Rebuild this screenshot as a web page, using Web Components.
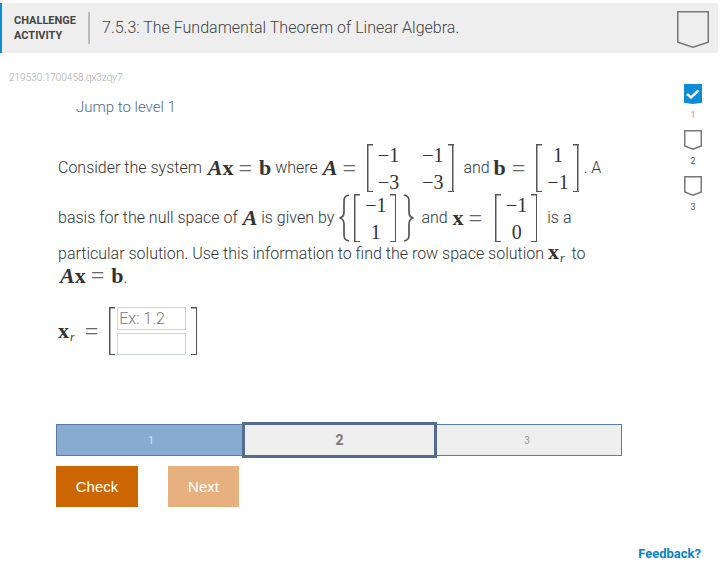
<!DOCTYPE html>
<html lang="en">
<head>
<meta charset="utf-8">
<title>Challenge activity</title>
<style>
  html, body { margin: 0; background: #fff; }
  body { font-family: Roboto, "Liberation Sans", sans-serif; color: #444; }
</style>
</head>
<body>
<challenge-activity>
  <span slot="title">7.5.3: The Fundamental Theorem of Linear Algebra.</span>
  <span slot="code">219530.1700458.qx3zqy7</span>
  <span slot="jump">Jump to level 1</span>
  <level-list slot="levels"></level-list>
  <question-text slot="question"></question-text>
  <answer-row slot="answer"></answer-row>
  <level-progress slot="progress"></level-progress>
</challenge-activity>

<script>
class LevelBadge extends HTMLElement {
    static tag = "level-badge";
    constructor() {
        super();
        this.attachShadow({ mode: 'open' });
    }
    connectedCallback() {
        const w = Number(this.getAttribute('data-w')) || 20;
        const h = Number(this.getAttribute('data-h')) || 21;
        const done = this.hasAttribute('data-done');
        const tip = done ? 2 : 2 + h * 0.1;
        const path = `M.75 .75H${w - .75}V${h - tip}L${w / 2} ${h - .75}L.75 ${h - tip}Z`;
        this.shadowRoot.innerHTML = `
            <style>
                :host { display: block; width: ${w}px; height: ${h}px; }
                svg { display: block; }
            </style>
            <svg width="${w}" height="${h}" viewBox="0 0 ${w} ${h}">
                <path d="${path}" fill="${done ? '#0d8bd9' : 'none'}" stroke="${done ? '#0d8bd9' : '#777'}" stroke-width="1.5"/>
                ${done ? `<path d="M3 10L7 13.5L14.5 6.5" fill="none" stroke="#fff" stroke-width="2.400"/>` : ''}
            </svg>`;
    }
}

class LevelList extends HTMLElement {
    static tag = "level-list";
    constructor() {
        super();
        this.attachShadow({ mode: 'open' });
        this.shadowRoot.innerHTML = `
            <style>
                :host { display: flex; flex-direction: column; align-items: center; width: 20px; }
                .item { display: flex; flex-direction: column; align-items: center; height: 46px; flex: none; }
                level-badge { flex: none; }
                span { font: 9px/11px Roboto, sans-serif; margin-top: 6px; color: #555; }
                .first span { color: #d98a94; }
            </style>
            <div class="item first"><level-badge data-w="18" data-h="20" data-done></level-badge><span>1</span></div>
            <div class="item"><level-badge data-w="18" data-h="20"></level-badge><span>2</span></div>
            <div class="item"><level-badge data-w="18" data-h="20"></level-badge><span>3</span></div>`;
    }
}

const BRACKETS = `
    linear-gradient(#555,#555) left/1.5px 100% no-repeat,
    linear-gradient(#555,#555) left top/6px 1.5px no-repeat,
    linear-gradient(#555,#555) left bottom/6px 1.5px no-repeat,
    linear-gradient(#555,#555) right/1.5px 100% no-repeat,
    linear-gradient(#555,#555) right top/6px 1.5px no-repeat,
    linear-gradient(#555,#555) right bottom/6px 1.5px no-repeat`;

class MathMatrix extends HTMLElement {
    static tag = "math-matrix";
    constructor() {
        super();
        this.attachShadow({ mode: 'open' });
    }
    connectedCallback() {
        const rows = this.getAttribute('data-rows').split(';').map(r => r.split(','));
        const cells = rows.flat().map(c => `<span>${c}</span>`).join('');
        this.shadowRoot.innerHTML = `
            <style>
                :host {
                    display: inline-grid;
                    grid-template-columns: repeat(${rows[0].length}, auto);
                    column-gap: 23px;
                    row-gap: 5px;
                    justify-items: center;
                    align-items: center;
                    align-content: center;
                    height: 48px;
                    box-sizing: border-box;
                    padding: 0 10px 0 11px;
                    font: 20px/22px "Liberation Serif", serif;
                    color: #333;
                    white-space: normal;
                    background: ${BRACKETS};
                }
            </style>${cells}`;
    }
}

class MathBrace extends HTMLElement {
    static tag = "math-brace";
    constructor() {
        super();
        this.attachShadow({ mode: 'open' });
    }
    connectedCallback() {
        const flip = this.hasAttribute('data-right') ? 'transform: scaleX(-1);' : '';
        this.shadowRoot.innerHTML = `
            <style>
                :host { display: block; width: 12px; height: 48px; white-space: normal; }
                svg { display: block; ${flip} }
            </style>
            <svg width="12" height="48" viewBox="0 0 12 48">
                <path d="M11 1C6.500 2 6 4 6 8V18C6 21.500 4.500 23.500 1.500 24C4.500 24.500 6 26.500 6 30V40C6 44 6.500 46 11 47" fill="none" stroke="#555" stroke-width="1.700"/>
            </svg>`;
    }
}

const MATH_CSS = `
    i, b { font-family: "Liberation Serif", serif; color: #333; font-size: 22px; font-weight: 700; line-height: 20px; }
    .eq { font: 24px/20px "Liberation Serif", serif; color: #666; margin: 0 7px 0 5px; }
    .eq.wide { margin: 0 11px 0 6px; }
    sub { font: italic 12px "Liberation Serif", serif; line-height: 0; color: #333; vertical-align: -3px; margin: 0 3px 0 1px; }
`;

class QuestionText extends HTMLElement {
    static tag = "question-text";
    constructor() {
        super();
        this.attachShadow({ mode: 'open' });
        this.shadowRoot.innerHTML = `
            <style>
                :host {
                    display: block;
                    width: 545px;
                    font: 300 16px/22px Roboto, sans-serif;
                    color: #333;
                }
                ${MATH_CSS}
                .l1, .l2 { display: flex; align-items: center; height: 48px; white-space: pre; }
                .l2 { margin-top: 2px; }
                .l1 math-matrix, .l2 math-matrix { flex: none; margin-right: 4px; }
                .start { margin-left: 2px; }
            </style>
            <div class="l1">Consider the system <i class="start">A</i><b>x</b><span class="eq">=</span><b>b</b> where <i style="margin-left:1px">A</i><span class="eq wide" style="margin-left:5px">=</span><math-matrix data-rows="−1,−1;−3,−3" style="margin-right:6px"></math-matrix> and <b>b</b><span class="eq wide">=</span><math-matrix data-rows="1;−1" style="margin-right:5px"></math-matrix>. A</div>
            <div class="l2">basis for the null space of <i style="margin-left:1px">A</i> is given by <math-brace></math-brace><math-matrix data-rows="−1;1" style="margin:0 7px 0 4px"></math-matrix><math-brace data-right style="margin-right:2px"></math-brace> and <b style="margin-left:1px">x</b><span class="eq wide" style="margin:0 13px 0 5px">=</span><math-matrix data-rows="−1;0" style="margin-right:6px"></math-matrix> is a</div>
            <div>particular solution. Use this information to find the row space solution <b>x</b><sub>r</sub> to</div>
            <div><i class="start">A</i><b>x</b><span class="eq">=</span><b>b</b>.</div>`;
    }
}

class AnswerRow extends HTMLElement {
    static tag = "answer-row";
    constructor() {
        super();
        this.attachShadow({ mode: 'open' });
        this.shadowRoot.innerHTML = `
            <style>
                :host { display: flex; align-items: center; height: 48px; }
                ${MATH_CSS}
                .eq { margin: 0 11px 0 7px; }
                .matrix {
                    display: flex; flex-direction: column; gap: 3px;
                    box-sizing: border-box; height: 48px; width: 88px; padding: 0 11px 0 8px;
                    background: ${BRACKETS};
                }
                input {
                    box-sizing: border-box; width: 69px; height: 22.5px; margin: 0; padding: 0 1px;
                    border: 1px solid #cfd8dc; border-radius: 0; outline: none; background: #fff;
                    font: 300 16px Roboto, sans-serif;
                }
                input::placeholder { color: #777; opacity: 1; }
            </style>
            <span><b>x</b><sub>r</sub></span><span class="eq">=</span>
            <div class="matrix">
                <input placeholder="Ex: 1.2" aria-label="first entry">
                <input aria-label="second entry">
            </div>`;
    }
}

class LevelProgress extends HTMLElement {
    static tag = "level-progress";
    constructor() {
        super();
        this.attachShadow({ mode: 'open' });
        this.shadowRoot.innerHTML = `
            <style>
                :host {
                    display: grid;
                    grid-template-columns: repeat(3, 1fr);
                    width: 566px;
                    height: 32px;
                    box-sizing: border-box;
                    border: 1px solid #5b7ea6;
                    font: 10px Roboto, sans-serif;
                }
                div { display: flex; align-items: center; justify-content: center; background: #eee; color: #999; }
                .done { background: #87abd1; color: #d5e2ef; }
                .current {
                    position: relative;
                    outline: 3px solid #546c8f;
                    margin-right: -1px;
                    font-weight: 700;
                    font-size: 14px;
                    color: #777;
                    z-index: 1;
                }
            </style>
            <div class="done">1</div>
            <div class="current">2</div>
            <div>3</div>`;
    }
}

class ChallengeActivity extends HTMLElement {
    static tag = "challenge-activity";
    constructor() {
        super();
        this.attachShadow({ mode: 'open' });
        this.shadowRoot.innerHTML = `
            <style>
                :host { display: block; width: 718px; height: 572px; overflow: hidden; padding-top: 3px; box-sizing: border-box; }
                header {
                    display: flex; align-items: center; height: 50px; box-sizing: border-box;
                    background: #eee; border-left: 2px solid #0d8bd9; padding: 0 9px 0 12px;
                }
                .kind { font: 700 11px/15px Roboto, sans-serif; color: #444; width: 62px; margin-top: -1px; }
                .rule { width: 2px; height: 32px; background: #bbb; margin: -1px 12px 0 12px; }
                .title { flex: 1; font: 300 16px Roboto, sans-serif; color: #444; margin-top: -1px; }
                header level-badge { margin-top: 2px; }
                .code { font: 300 10px/12px Roboto, sans-serif; color: #aaa; margin: 19px 0 0 9px; }
                .main { display: flex; justify-content: space-between; padding: 0 15px 0 58px; }
                .jump { font: 300 15px/20px Roboto, sans-serif; color: #4f6a8f; margin: 13px 0 0 18px; }
                .levels { margin-top: 0; }
                .q { margin-top: 27px; }
                .a { margin: 18px 0 0; }
                .progress { margin: 69px 0 0 -2px; }
                .buttons { display: flex; gap: 30px; margin: 10px 0 0 -2px; }
                button {
                    height: 41px; border: 0; padding: 0; color: #fff;
                    font: 15px "Liberation Sans", sans-serif;
                }
                .check { width: 82px; background: #c60; }
                .next { width: 71px; background: #e6b17f; }
                .feedback { display: block; text-align: right; margin: 39px 17px 0 0; font: 700 13px/16px Roboto, sans-serif; color: #0d7fc9; text-decoration: none; }
            </style>
            <header>
                <div class="kind">CHALLENGE<br>ACTIVITY</div>
                <div class="rule"></div>
                <div class="title"><slot name="title"></slot></div>
                <level-badge data-w="32" data-h="37"></level-badge>
            </header>
            <div class="code"><slot name="code"></slot></div>
            <div class="main">
                <div>
                    <div class="jump"><slot name="jump"></slot></div>
                    <div class="q"><slot name="question"></slot></div>
                    <div class="a"><slot name="answer"></slot></div>
                    <div class="progress"><slot name="progress"></slot></div>
                    <div class="buttons">
                        <button class="check">Check</button>
                        <button class="next">Next</button>
                    </div>
                </div>
                <div class="levels"><slot name="levels"></slot></div>
            </div>
            <a class="feedback" href="#">Feedback?</a>`;
    }
}

[LevelBadge, LevelList, MathMatrix, MathBrace, QuestionText, AnswerRow, LevelProgress, ChallengeActivity]
    .forEach(c => customElements.define(c.tag, c));
</script>
</body>
</html>
